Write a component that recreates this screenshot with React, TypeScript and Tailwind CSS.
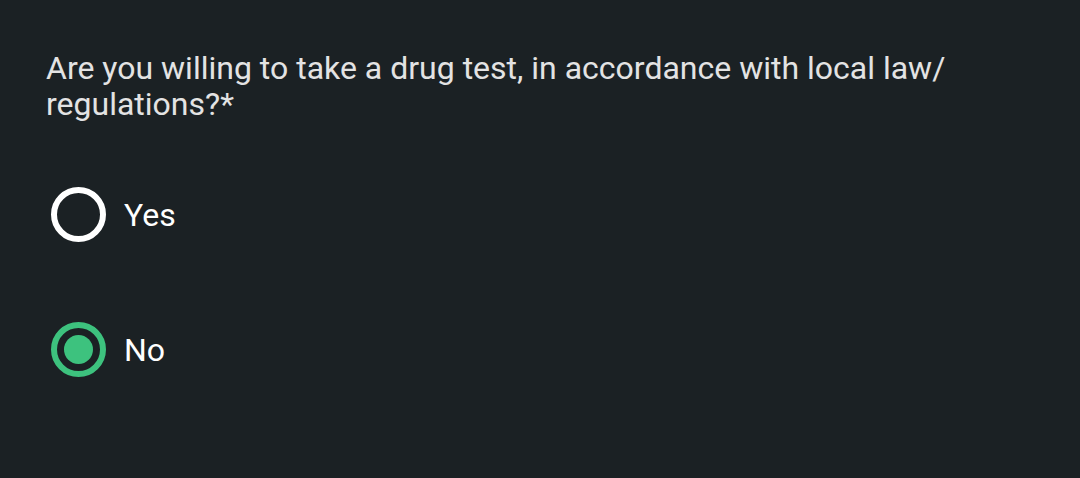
export default function App() {
  return (
    <div
      className="w-[1080px] h-[478px] bg-[#1b2124] px-[46px] pt-[50px] overflow-hidden"
      style={{ fontFamily: 'Roboto, "Liberation Sans", sans-serif' }}
    >
      <p className="text-[#e3e3e3] text-[32px] leading-[36px] w-[990px]">
        Are you willing to take a drug test, in accordance with local law/ regulations?*
      </p>
      <div className="mt-[65px] flex flex-col gap-[80px]">
        <label className="flex items-center gap-[18px]">
          <span className="ml-[5px] w-[55px] h-[55px] rounded-full border-[6px] border-white" />
          <span className="text-white text-[32px]">Yes</span>
        </label>
        <label className="flex items-center gap-[18px]">
          <span className="ml-[5px] w-[55px] h-[55px] rounded-full border-[6px] border-[#3dc27e] flex items-center justify-center">
            <span className="w-[29px] h-[29px] rounded-full bg-[#3dc27e]" />
          </span>
          <span className="text-white text-[32px]">No</span>
        </label>
      </div>
    </div>
  );
}
